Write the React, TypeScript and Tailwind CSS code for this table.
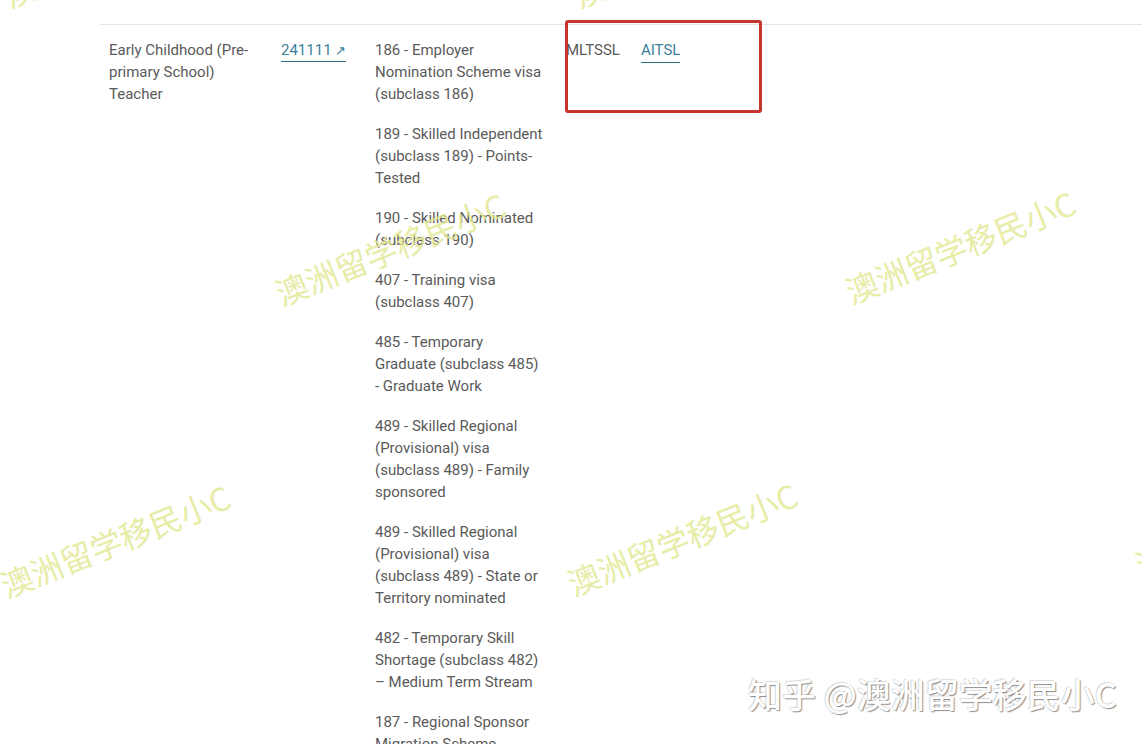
import React from "react";

const visas: string[] = [
  "186 - Employer Nomination Scheme visa (subclass 186)",
  "189 - Skilled Independent (subclass 189) - Points-Tested",
  "190 - Skilled Nominated (subclass 190)",
  "407 - Training visa (subclass 407)",
  "485 - Temporary Graduate (subclass 485) - Graduate Work",
  "489 - Skilled Regional (Provisional) visa (subclass 489) - Family sponsored",
  "489 - Skilled Regional (Provisional) visa (subclass 489) - State or Territory nominated",
  "482 - Temporary Skill Shortage (subclass 482) \u2013 Medium Term Stream",
  "187 - Regional Sponsor Migration Scheme (subclass 187)",
  "494 - Skilled Employer Sponsored Regional (provisional) (subclass 494)",
];

const marks: { left: number; top: number }[] = [
  { left: 118, top: -50 },
  { left: 688, top: -50 },
  { left: 390, top: 248 },
  { left: 960, top: 246 },
  { left: 115, top: 540 },
  { left: 682, top: 538 },
  { left: 1250, top: 520 },
];

export default function App() {
  return (
    <div
      className="relative w-[1142px] h-[744px] overflow-hidden bg-white text-[15px] leading-[22px] text-[#5a5a5a]"
      style={{ fontFamily: "Roboto, 'Noto Sans', Arial, sans-serif" }}
    >
      <div className="pl-[100px] pt-[24px]">
        <div className="border-t border-[#e3e3e3] pt-[14px] flex">
          <div className="w-[172px] pl-[9px] pr-[6px]">
            Early Childhood (Pre-primary School) Teacher
          </div>
          <div className="w-[94px] pl-[9px]">
            <span className="text-[#3b8199] border-b border-[#2f6f86] pb-[2px]">
              241111 <span className="text-[13px]">&#8599;</span>
            </span>
          </div>
          <div className="w-[191px] pl-[9px] pr-[12px] flex flex-col gap-[18px]">
            {visas.map((v) => (
              <div key={v}>{v}</div>
            ))}
          </div>
          <div className="flex pl-[9px]">
            <span>MLTSSL</span>
            <span className="ml-[21px] text-[#3b8199] border-b border-[#2f6f86] h-[24px]">
              AITSL
            </span>
          </div>
        </div>
      </div>

      <div className="absolute left-[565px] top-[20px] w-[197px] h-[93px] border-[3px] border-[#c4362c] rounded-[3px]" />

      {marks.map((m, i) => (
        <div
          key={i}
          className="absolute whitespace-nowrap text-[32px] leading-[36px] text-[#e2e890] opacity-80 -translate-x-1/2 -translate-y-1/2 -rotate-[22deg]"
          style={{
            left: m.left,
            top: m.top,
            fontFamily: "'Noto Sans CJK SC', 'Noto Sans', sans-serif",
          }}
        >
          澳洲留学移民小C
        </div>
      ))}

      <div
        className="absolute left-[748px] top-[674px] whitespace-nowrap text-[34px] leading-[40px] font-medium text-white [text-shadow:1px_1px_1px_rgba(0,0,0,0.45),-1px_-1px_1px_rgba(0,0,0,0.15)]"
        style={{ fontFamily: "'Noto Sans CJK SC', 'Noto Sans', sans-serif" }}
      >
        知乎 @澳洲留学移民小C
      </div>
    </div>
  );
}
